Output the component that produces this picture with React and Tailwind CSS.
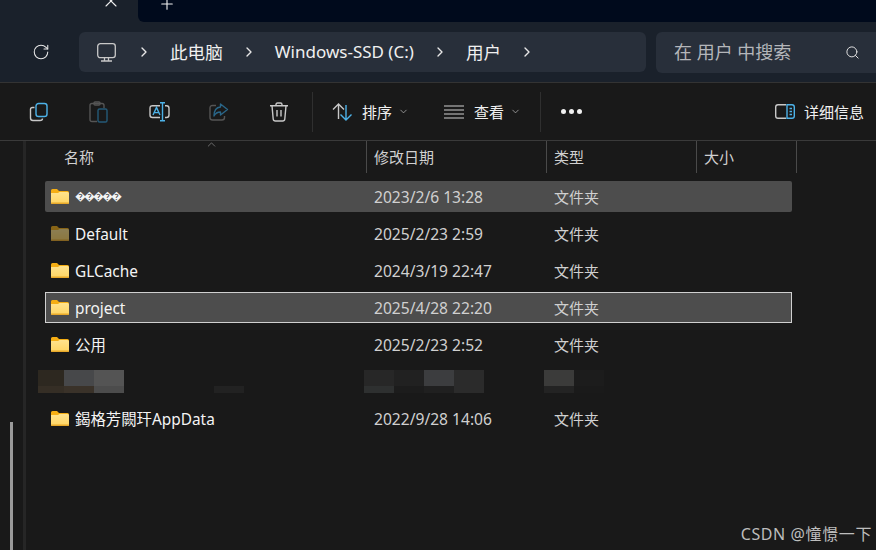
import { RotateCw, ChevronRight, ChevronDown, ChevronUp, Search, X, Plus } from "lucide-react";

const FONT = "font-['Noto_Sans','Noto_Sans_CJK_SC',sans-serif]";

const FolderIcon = ({ dim }) => (
    <svg width="18" height="15" viewBox="0 0 18 15" className={dim ? "opacity-50 shrink-0" : "shrink-0"}>
        <path d="M0 1.5 Q0 0 1.5 0 H6 L8 2 H16.5 Q18 2 18 3.5 V5 H0 Z" fill="#f5ae14" />
        <path d="M0 4 H7 L8.5 3 H16.5 Q18 3 18 4.5 V13.5 Q18 15 16.5 15 H1.5 Q0 15 0 13.5 Z" fill="url(#folderFill)" />
        <rect x="0" y="13.5" width="18" height="1.5" rx="0.7" fill="#e8a92a" />
        <defs>
            <linearGradient id="folderFill" x1="0" y1="0" x2="0" y2="1">
                <stop offset="0" stopColor="#ffe38e" />
                <stop offset="1" stopColor="#ffd562" />
            </linearGradient>
        </defs>
    </svg>
);

const PcIcon = () => (
    <svg width="19" height="19" viewBox="0 0 19 19" fill="none" stroke="#c8c8c8" strokeWidth="1.3" className="shrink-0">
        <rect x="0.7" y="0.7" width="17.6" height="14" rx="2.6" />
        <path d="M7.5 14.7 V17.6 M11.5 14.7 V17.6 M4 18 H15" />
    </svg>
);

const CopyIcon = () => (
    <svg width="20" height="20" viewBox="0 0 20 20" fill="none" strokeWidth="1.4">
        <path d="M5.5 5.5 H3.5 Q1.5 5.5 1.5 7.5 V16 Q1.5 18.5 4 18.5 H11 Q13.5 18.5 13.5 16.5" stroke="#c8c8c8" />
        <rect x="7" y="1.5" width="11" height="13" rx="2.6" stroke="#4db2e8" />
    </svg>
);

const PasteIcon = () => (
    <svg width="20" height="22" viewBox="0 0 20 22" fill="none" strokeWidth="1.4">
        <path d="M8 20.5 H3 Q1 20.5 1 18.5 V4.5 Q1 2.5 3 2.5 H13 Q15 2.5 15 4.5 V7" stroke="#555" />
        <rect x="5" y="1" width="6" height="3" rx="1" stroke="#555" />
        <rect x="9" y="8" width="9" height="13" rx="1.6" stroke="#245a78" />
    </svg>
);

const RenameIcon = () => (
    <svg width="21" height="20" viewBox="0 0 21 20" fill="none" strokeWidth="1.4">
        <path d="M11 3.7 H3.5 Q1 3.7 1 6.2 V13 Q1 15.5 3.5 15.5 H11" stroke="#c8c8c8" />
        <path d="M16 3.7 H17.5 Q20 3.7 20 6.2 V13 Q20 15.5 17.5 15.5 H16" stroke="#c8c8c8" />
        <path d="M11 0.8 H16 M13.5 0.8 V18.8 M11 18.8 H16" stroke="#4db2e8" />
        <path d="M4 13 L7.5 5.5 L11 13 M5.2 10.6 H9.8" stroke="#4db2e8" />
    </svg>
);

const ShareIcon = () => (
    <svg width="20" height="20" viewBox="0 0 20 20" fill="none" strokeWidth="1.4">
        <path d="M7 3.5 H3.5 Q1 3.5 1 6 V15.5 Q1 18 3.5 18 H13 Q15.5 18 15.5 15.5 V14" stroke="#555" />
        <path d="M11.5 2 L18.5 7.5 L11.5 13 V10 Q7 10 5 14 Q5 5.5 11.5 5 Z" stroke="#2a6688" strokeLinejoin="round" />
    </svg>
);

const TrashIcon = () => (
    <svg width="18" height="20" viewBox="0 0 18 20" fill="none" stroke="#c8c8c8" strokeWidth="1.4">
        <path d="M0 3.7 H18 M6 3.7 V2.5 Q6 1 7.5 1 H10.5 Q12 1 12 2.5 V3.7" />
        <path d="M2 3.7 L3.2 17 Q3.4 19 5.4 19 H12.6 Q14.6 19 14.8 17 L16 3.7" />
        <path d="M7 8 V14.5 M11 8 V14.5" />
    </svg>
);

const SortIcon = () => (
    <svg width="20" height="18" viewBox="0 0 20 18" fill="none" strokeWidth="1.4">
        <path d="M1 6.5 L6.5 1 L12 6.5 M6.5 1 V16" stroke="#c8c8c8" />
        <path d="M8.5 11.5 L14 17 L19.5 11.5 M14 2 V17" stroke="#4db2e8" />
    </svg>
);

const ViewIcon = () => (
    <svg width="20" height="14" viewBox="0 0 20 14" fill="none" stroke="#d0d0d0" strokeWidth="1.2">
        <path d="M0 1 H20 M0 5 H20 M0 9 H20 M0 13 H20" />
    </svg>
);

const DetailsIcon = () => (
    <svg width="20" height="15" viewBox="0 0 20 15" fill="none" strokeWidth="1.4">
        <path d="M11 0.7 H3 Q0.7 0.7 0.7 3 V12 Q0.7 14.3 3 14.3 H11" stroke="#c8c8c8" />
        <path d="M12 0.7 H17 Q19.3 0.7 19.3 3 V12 Q19.3 14.3 17 14.3 H12 Z" stroke="#4db2e8" />
        <path d="M14.5 4.5 H17 M14.5 7.5 H17 M14.5 10.5 H17" stroke="#4db2e8" />
    </svg>
);

const ToolButton = ({ children, className }) => (
    <div className={`flex items-center justify-center w-[60px] h-full ${className || ""}`}>{children}</div>
);

const Divider = () => <div className="w-px h-[40px] bg-[#2f2f2f] shrink-0" />;

const Crumb = ({ children, size }) => <span className={`${size || "text-[17.6px]"} text-[#f0f0f0] whitespace-nowrap`}>{children}</span>;

const Sep = () => <ChevronRight size={16} strokeWidth={2} className="text-[#e8e8e8] shrink-0" />;

const rows = [
    { name: "\uFFFD\uFFFD\uFFFD\uFFFD\uFFFD", date: "2023/2/6 13:28", state: "hover", garbled: true },
    { name: "Default", date: "2025/2/23 2:59", dim: true },
    { name: "GLCache", date: "2024/3/19 22:47" },
    { name: "project", date: "2025/4/28 22:20", state: "selected" },
    { name: "公用", date: "2025/2/23 2:52" },
    { mosaic: true },
    { name: "鍻格芳闕玕AppData", date: "2022/9/28 14:06" },
];

const Cell = ({ top, bottom }) => (
    <div className="w-[30px] h-[23px] flex flex-col shrink-0">
        <div className={`h-[16px] ${top}`} />
        <div className={`h-[7px] ${bottom}`} />
    </div>
);

const MosaicRow = () => (
    <div className="h-[31px] flex items-center">
        <div className="w-[26px] h-[23px] flex flex-col shrink-0 -ml-[7px]">
            <div className="h-[16px] bg-[#2d2820]" />
            <div className="h-[7px] bg-[#352e25]" />
        </div>
        <Cell top="bg-[#47484a]" bottom="bg-[#3a3229]" />
        <Cell top="bg-[#545454]" bottom="bg-[#4c4c4c]" />
        <div className="w-[90px] shrink-0" />
        <Cell top="bg-transparent" bottom="bg-[#222222]" />
        <div className="w-[120px] shrink-0" />
        <Cell top="bg-[#272727]" bottom="bg-[#2e3030]" />
        <Cell top="bg-[#212121]" bottom="bg-[#1c1c1c]" />
        <Cell top="bg-[#3c3d3f]" bottom="bg-[#202020]" />
        <Cell top="bg-[#2b2b2b]" bottom="bg-[#2b2b2b]" />
        <div className="w-[60px] shrink-0" />
        <Cell top="bg-[#3b3b3a]" bottom="bg-[#232323]" />
        <Cell top="bg-[#1c1c1c]" bottom="bg-[#1a1a1a]" />
    </div>
);

const renderRow = (row) => {
    if (row.mosaic) return <MosaicRow key="mosaic" />;
    let look = "";
    if (row.state === "hover") look = "bg-[#4d4d4d] rounded-[2px]";
    if (row.state === "selected") look = "bg-[#4d4d4d] ring-1 ring-inset ring-[#d0d0d0]";
    const nameStyle = row.garbled
        ? "text-[11px] font-bold tracking-[-2px]"
        : "pt-[3px] text-[15.4px]";
    return (
        <div key={row.name} className={`relative h-[31px] flex items-center w-[747px] box-border ${look}`}>
            <div className="w-[30px] pl-[6px] shrink-0 flex"><FolderIcon dim={row.dim} /></div>
            <div className={`w-[299px] shrink-0 text-[#f4f4f4] whitespace-nowrap ${nameStyle}`}>{row.name}</div>
            <div className="w-[180px] shrink-0 pt-[3px] text-[15.6px] text-[#d0d0d0] whitespace-nowrap">{row.date}</div>
            <div className="pt-px text-[15px] text-[#d0d0d0]">文件夹</div>
        </div>
    );
};

const HeaderCell = ({ children, className }) => (
    <div className={`h-[32px] border-r border-[#4a4a4a] flex items-center pl-[7px] pt-px text-[15px] text-[#d0d0d0] shrink-0 box-border ${className}`}>
        {children}
    </div>
);

export default function App() {
    return (
        <div className={`w-[876px] h-[550px] overflow-hidden flex flex-col bg-[#191919] ${FONT}`}>
            {/* title + address area */}
            <div className="bg-[#1a212b] h-[82px] shrink-0 flex flex-col">
                <div className="h-[22px] flex shrink-0">
                    <div className="w-[138px] flex items-start justify-end shrink-0 pr-[17px] overflow-hidden">
                        <X size={20} strokeWidth={1.3} className="text-[#f0f0f0] -mt-[9px] shrink-0" />
                    </div>
                    <div className="flex-1 bg-[#000a1c] rounded-bl-[6px] pl-[20px] overflow-hidden">
                        <Plus size={18} strokeWidth={1.5} className="text-[#f0f0f0] -mt-[5px]" />
                    </div>
                </div>
                <div className="flex items-center mt-[10px] h-[40px]">
                    <div className="w-[79px] flex justify-center pl-[3px] shrink-0">
                        <RotateCw size={18} strokeWidth={1.4} className="text-[#e8e8e8]" />
                    </div>
                    <div className="w-[567px] h-[40px] bg-[#282f3a] rounded-[6px] flex items-center pl-[18px] shrink-0">
                        <PcIcon />
                        <div className="ml-[20px] flex items-center gap-[18px]">
                            <Sep />
                            <Crumb>此电脑</Crumb>
                            <Sep />
                            <Crumb size="text-[17px]">Windows-SSD (C:)</Crumb>
                            <Sep />
                            <Crumb>用户</Crumb>
                            <Sep />
                        </div>
                    </div>
                    <div className="flex-1 h-[41px] bg-[#282f3a] rounded-l-[6px] ml-[10px] flex items-center pl-[18px] pr-[16px] justify-between">
                        <span className="text-[18px] text-[#b4b6ba] whitespace-nowrap">在 用户 中搜索</span>
                        <Search size={15} strokeWidth={1.6} className="text-[#e0e0e0]" />
                    </div>
                </div>
            </div>

            {/* toolbar */}
            <div className="h-[59px] shrink-0 border-y border-[#333333] border-b-[#3a3a3a] flex items-center pl-[9px] box-border">
                <ToolButton><CopyIcon /></ToolButton>
                <ToolButton><PasteIcon /></ToolButton>
                <ToolButton><RenameIcon /></ToolButton>
                <ToolButton><ShareIcon /></ToolButton>
                <ToolButton><TrashIcon /></ToolButton>
                <div className="w-[3px] shrink-0" />
                <Divider />
                <div className="flex items-center ml-[19px] w-[94px] shrink-0">
                    <SortIcon />
                    <span className="ml-[10px] pt-[2px] text-[15px] text-[#f0f0f0]">排序</span>
                    <ChevronDown size={11} strokeWidth={1.6} className="ml-[6px] text-[#b8b8b8]" />
                </div>
                <div className="flex items-center ml-[18px] w-[78px] shrink-0">
                    <ViewIcon />
                    <span className="ml-[10px] pt-[2px] text-[15px] text-[#f0f0f0]">查看</span>
                    <ChevronDown size={11} strokeWidth={1.6} className="ml-[6px] text-[#b8b8b8]" />
                </div>
                <div className="w-[18px] shrink-0" />
                <Divider />
                <div className="ml-[20px] flex gap-[3px] shrink-0">
                    <div className="w-[5px] h-[5px] rounded-full bg-[#f0f0f0]" />
                    <div className="w-[5px] h-[5px] rounded-full bg-[#f0f0f0]" />
                    <div className="w-[5px] h-[5px] rounded-full bg-[#f0f0f0]" />
                </div>
                <div className="ml-auto flex items-center pr-[12px]">
                    <DetailsIcon />
                    <span className="ml-[9px] pt-[2px] text-[15px] text-[#f0f0f0]">详细信息</span>
                </div>
            </div>

            {/* body */}
            <div className="flex-1 flex min-h-0">
                <div className="w-[23px] shrink-0 flex flex-col justify-end pl-[10px]">
                    <div className="w-[3px] h-[128px] bg-[#9a9a9a]" />
                </div>
                <div className="w-[3px] shrink-0 bg-[#262626]" />
                <div className="flex-1 min-w-0 relative">
                    <ChevronUp size={13} strokeWidth={1} className="absolute left-[179px] -top-[3px] text-[#b0b0b0]" />
                    <div className="flex">
                        <HeaderCell className="w-[341px] pl-[38px] border-r-[#4a4a4a]">名称</HeaderCell>
                        <HeaderCell className="w-[180px]">修改日期</HeaderCell>
                        <HeaderCell className="w-[150px]">类型</HeaderCell>
                        <HeaderCell className="w-[100px]">大小</HeaderCell>
                    </div>
                    <div className="ml-[19px] mt-[8px] flex flex-col gap-[6px]">
                        {rows.map(renderRow)}
                    </div>
                    <div className="absolute right-[4px] bottom-[4px] text-[16px] tracking-[0.6px] text-[#bdbdbd] whitespace-nowrap">CSDN @憧憬一下</div>
                </div>
            </div>
        </div>
    );
}
